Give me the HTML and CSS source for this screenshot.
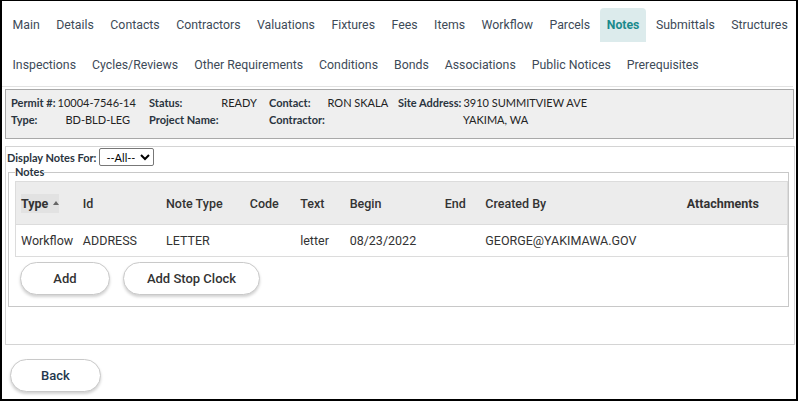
FILE: index.html
```html
<!DOCTYPE html>
<html lang="en">
<head>
  <meta charset="UTF-8" />
  <title>Permit Notes</title>
  <link rel="stylesheet" href="styles.css">
</head>
<body>
  <div class="frame">
    <nav class="tabs">
      <ul class="tab-row first">
        <li><a href="#">Main</a></li>
        <li><a href="#">Details</a></li>
        <li><a href="#">Contacts</a></li>
        <li><a href="#">Contractors</a></li>
        <li><a href="#">Valuations</a></li>
        <li><a href="#">Fixtures</a></li>
        <li><a href="#">Fees</a></li>
        <li><a href="#">Items</a></li>
        <li><a href="#">Workflow</a></li>
        <li><a href="#">Parcels</a></li>
        <li class="active"><a href="#">Notes</a></li>
        <li><a href="#">Submittals</a></li>
        <li><a href="#">Structures</a></li>
      </ul>
      <ul class="tab-row">
        <li><a href="#">Inspections</a></li>
        <li><a href="#">Cycles/Reviews</a></li>
        <li><a href="#">Other Requirements</a></li>
        <li><a href="#">Conditions</a></li>
        <li><a href="#">Bonds</a></li>
        <li><a href="#">Associations</a></li>
        <li><a href="#">Public Notices</a></li>
        <li><a href="#">Prerequisites</a></li>
      </ul>
    </nav>

    <div class="permit-info">
      <div class="info-col c1">
        <div><b>Permit #:</b><span class="v1">10004-7546-14</span></div>
        <div><b>Type:</b><span class="v1 type">BD-BLD-LEG</span></div>
      </div>
      <div class="info-col c2">
        <div><b>Status:</b><span class="status">READY</span></div>
        <div><b>Project Name:</b></div>
      </div>
      <div class="info-col c3">
        <div><b>Contact:</b><span class="contact">RON SKALA</span></div>
        <div><b>Contractor:</b></div>
      </div>
      <div class="info-col c4">
        <div><b>Site Address:</b><span class="v1">3910 SUMMITVIEW AVE</span></div>
        <div class="addr2">YAKIMA, WA</div>
      </div>
    </div>

    <div class="panel">
      <div class="filter">
        <label for="noteFor">Display Notes For:</label>
        <select id="noteFor"><option>--All--</option></select>
      </div>
      <fieldset class="notes">
        <legend>Notes</legend>
        <table class="grid">
          <thead>
            <tr>
              <th class="sorted"><span>Type <i class="arrow"></i></span></th>
              <th>Id</th>
              <th>Note Type</th>
              <th>Code</th>
              <th>Text</th>
              <th>Begin</th>
              <th class="end">End</th>
              <th>Created By</th>
              <th class="att">Attachments</th>
            </tr>
          </thead>
          <tbody>
            <tr>
              <td>Workflow</td>
              <td>ADDRESS</td>
              <td>LETTER</td>
              <td></td>
              <td>letter</td>
              <td>08/23/2022</td>
              <td></td>
              <td>GEORGE@YAKIMAWA.GOV</td>
              <td></td>
            </tr>
          </tbody>
        </table>
        <div class="actions">
          <button class="pill add">Add</button>
          <button class="pill stop">Add Stop Clock</button>
        </div>
      </fieldset>
    </div>

    <div class="footer-actions">
      <button class="pill back">Back</button>
    </div>
  </div>
</body>
</html>
```

FILE: styles.css
```css
 html, body {
   margin: 0;
   padding: 0;
   background: #fff;
 }
 .frame {
   box-sizing: border-box;
   width: 798px;
   height: 401px;
   border: 2px solid #000;
   border-top-width: 1px;
   overflow: hidden;
   font-family: Roboto, "Liberation Sans", sans-serif;
   color: #333;
 }

 /* tabs */
 .tabs {
   padding: 7px 0 4px 4px;
   border-bottom: 1px solid #e2e2e2;
   margin-right: 3px;
 }
 .tab-row {
   list-style: none;
   margin: 0;
   padding: 0;
   display: flex;
   height: 34px;
 }
 .tab-row + .tab-row {
   margin-top: 6px;
 }
 .tab-row li a {
   display: block;
   padding: 0 6.5px;
   margin-right: 3px;
   line-height: 34px;
   font-size: 12.3px;
   color: #3d4a57;
   text-decoration: none;
   border-radius: 4px 4px 0 0;
 }
 .tab-row.first li a {
   margin-right: 3.5px;
 }
 .tab-row li.active a {
   background: #dcebec;
   color: #1b8a8c;
   font-weight: bold;
 }

 /* permit header */
 .permit-info {
   display: flex;
   margin: 2px 2px 0 3px;
   height: 44px;
   padding: 4px 0 0 5px;
   background: #efefef;
   border: 1px solid #a9a9a9;
   font-family: Lato, "Liberation Sans", sans-serif;
   font-size: 11px;
   color: #222;
 }
 .permit-info b {
   color: #2a3440;
   margin-right: 2px;
 }
 .info-col {
   flex: none;
   min-width: 0;
 }
 .info-col div {
   line-height: 17px;
   white-space: nowrap;
 }
 .c1 { width: 138px; }
 .c2 { width: 120px; }
 .c3 { width: 129px; }
 .type { margin-left: 26px; }
 .status { margin-left: 37px; }
 .contact { margin-left: 15px; }
 .addr2 { padding-left: 65px; }

 /* notes panel */
 .panel {
   margin: 7px 1px 0 3px;
   height: 197px;
   border: 1px solid #d4d4d4;
 }
 .filter {
   display: flex;
   align-items: center;
   gap: 3px;
   padding: 0 0 0 1px;
   height: 20px;
   font-family: Lato, "Liberation Sans", sans-serif;
   font-size: 11px;
   font-weight: bold;
   color: #2a3440;
 }
 .filter select {
   height: 18px;
   width: 55px;
   font-size: 11px;
   font-family: Lato, "Liberation Sans", sans-serif;
   border: 1px solid #777;
   border-radius: 2px;
   background: #fff;
   padding: 0 2px;
 }
 .notes {
   margin: 0 5px 0 2px;
   padding: 4px 0 10px 6px;
   height: 124px;
   border: 1px solid #c8c8c8;
 }
 .notes legend {
   padding: 0;
   font-family: Lato, "Liberation Sans", sans-serif;
   font-size: 11px;
   font-weight: bold;
   color: #2a3440;
   line-height: 10px;
 }
 .grid {
   width: 773px;
   border-collapse: collapse;
   border: 1px solid #dcdcdc;
   font-size: 12.5px;
 }
 .grid th {
   background: #ececec;
   height: 42px;
   text-align: left;
   font-weight: 500;
   color: #333;
   padding: 0 0 0 5px;
   border-bottom: 1px solid #dcdcdc;
 }
 .grid th.sorted span {
   font-weight: bold;
   background: #e2e2e2;
   padding: 2px 0;
 }
 .arrow {
   display: inline-block;
   width: 0;
   height: 0;
   border-left: 3px solid transparent;
   border-right: 3px solid transparent;
   border-bottom: 4px solid #666;
   vertical-align: 3px;
   margin-left: 2px;
 }
 .grid th.att {
   font-weight: bold;
   padding-right: 28px;
 }
 .grid td {
   height: 31px;
   padding: 0 0 0 5px;
   color: #333;
   white-space: nowrap;
 }
 .grid th:nth-child(1) { width: 57px; }
 .grid th:nth-child(2) { width: 79px; }
 .grid th:nth-child(3) { width: 80px; }
 .grid th:nth-child(4) { width: 46px; }
 .grid th:nth-child(5) { width: 45px; }
 .grid th:nth-child(6) { width: 91px; }
 .grid th:nth-child(7) { width: 36px; }
 .grid th:nth-child(8) { width: 198px; }

 .actions {
   display: flex;
   gap: 13px;
   padding: 5px 0 0 5px;
 }
 .pill {
   height: 33px;
   border: 1px solid #c9c9c9;
   border-radius: 17px;
   background: #fff;
   box-shadow: 0 2px 3px rgba(0, 0, 0, 0.18);
   font-family: Roboto, "Liberation Sans", sans-serif;
   font-size: 13px;
   font-weight: 500;
   color: #333;
   cursor: pointer;
 }
 .add { width: 90px; }
 .stop { width: 137px; }

 .footer-actions {
   padding: 14px 0 0 8px;
 }
 .back {
   width: 91px;
   color: #23384d;
 }
```
